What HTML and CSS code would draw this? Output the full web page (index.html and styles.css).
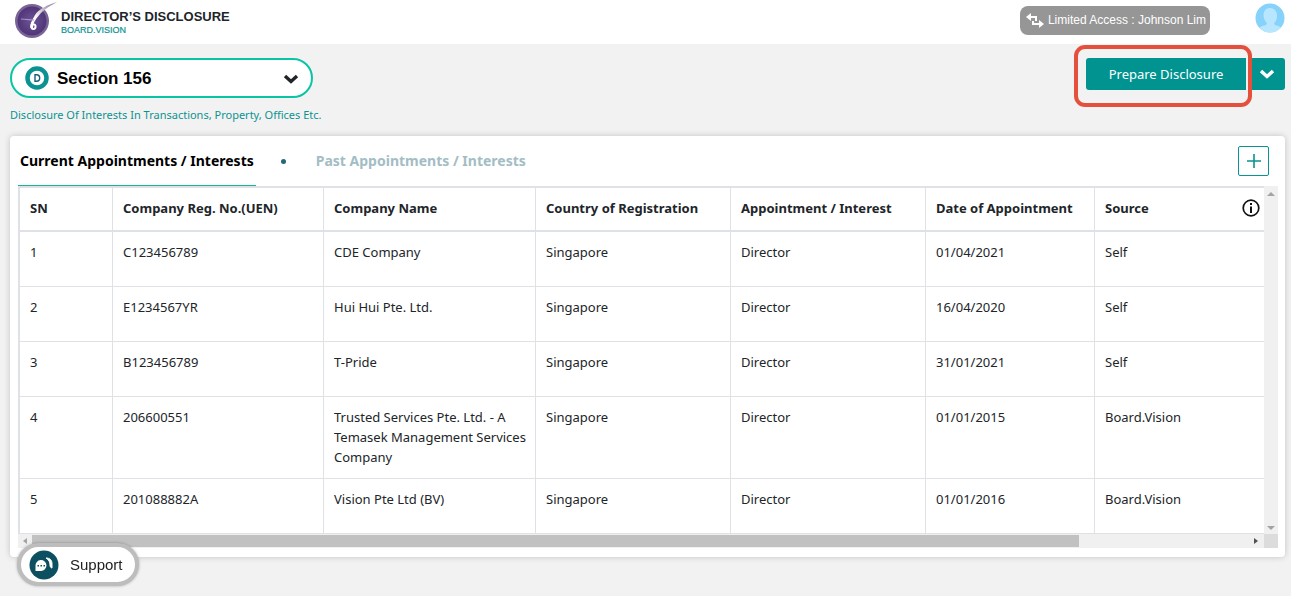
FILE: index.html
```html
<!DOCTYPE html>
<html lang="en">
<head>
  <meta charset="UTF-8">
  <meta name="viewport" content="width=device-width, initial-scale=1.0">
  <title>Director's Disclosure</title>
  <link rel="stylesheet" href="styles.css">
</head>
<body>
  <header class="header">
    <svg class="logo" viewBox="0 0 44 40" aria-hidden="true">
      <defs>
        <radialGradient id="logoFill">
          <stop offset="0" stop-color="#6f5299"/>
          <stop offset="1" stop-color="#4f3677"/>
        </radialGradient>
        <linearGradient id="logoTail" gradientUnits="userSpaceOnUse" x1="22" y1="19" x2="42" y2="1">
          <stop offset="0" stop-color="#fff"/>
          <stop offset="0.6" stop-color="#b3a3bb"/>
          <stop offset="1" stop-color="#86739a"/>
        </linearGradient>
      </defs>
      <circle cx="18" cy="21" r="17" fill="#7a6497"/>
      <circle cx="18" cy="21" r="14.5" fill="url(#logoFill)"/>
      <path d="M43 2C33 5 25 9 21 15c-2 4-5 8-4.500 13h2.500C19 23 21 20 24.500 16 29 10 36 6 43 2z" fill="url(#logoTail)"/>
      <path d="M18 23c-1.500 4-.5 6.500 1.800 6s2.400-5-.3-4.500" fill="none" stroke="#fff" stroke-width="2" stroke-linecap="round"/>
      <path d="M7 19c5 0 9 1 13 1" fill="none" stroke="#a794bd" stroke-width="1.200"/>
    </svg>
    <div class="brand">
      <h1>DIRECTOR’S DISCLOSURE</h1>
      <span>BOARD.VISION</span>
    </div>
    <button class="access-btn" type="button">
      <svg viewBox="0 0 18 15" width="18" height="15" aria-hidden="true">
        <path d="M0 4l5-4v3h6v5H9V5H5v3zM18 11l-5 4v-3H6V8h2v2h5V7z" fill="#fff"/>
      </svg>
      Limited Access : Johnson Lim
    </button>
    <button class="avatar" type="button" aria-label="Profile">
      <svg viewBox="0 0 30 30" aria-hidden="true">
        <defs><clipPath id="avatarClip"><circle cx="15" cy="15" r="14.5"/></clipPath></defs>
        <g clip-path="url(#avatarClip)">
          <rect width="30" height="30" fill="#86d2fa"/>
          <path d="M2 30c0-6 5-7 9-8l1-2C7 16 7 5 15 5s9 11 4 15l1 2c4 1 8 2 8 8z" fill="#b9e6ff"/>
        </g>
      </svg>
    </button>
  </header>

  <main class="content">
    <div class="toolbar">
      <div class="section-select">
        <svg class="section-badge" viewBox="0 0 24 24" aria-hidden="true">
          <circle cx="12" cy="12" r="9.5" fill="#fff" stroke="#0b9391" stroke-width="4.500"/>
          <path d="M10 8.800h1.500a3.200 3.200 0 0 1 0 6.400H10z" fill="none" stroke="#17607a" stroke-width="1.400"/>
        </svg>
        <select aria-label="Section">
          <option>Section 156</option>
        </select>
        <svg class="section-arrow" viewBox="0 0 16 10" aria-hidden="true">
          <path d="M2 2l6 5.500L14 2" fill="none" stroke="#212529" stroke-width="3.400"/>
        </svg>
      </div>
      <div class="actions">
        <div class="highlighted">
          <button class="prepare-btn" type="button">Prepare Disclosure</button>
        </div>
        <button class="more-btn" type="button" aria-label="More actions">
          <svg viewBox="0 0 16 10" width="16" height="10" aria-hidden="true">
            <path d="M2 2l6 5.500L14 2" fill="none" stroke="#fff" stroke-width="3.400"/>
          </svg>
        </button>
      </div>
    </div>
    <p class="description">Disclosure Of Interests In Transactions, Property, Offices Etc.</p>

    <section class="card">
      <nav class="tabs">
        <a class="tab active" href="#current">Current Appointments / Interests</a>
        <span class="dot"></span>
        <a class="tab" href="#past">Past Appointments / Interests</a>
        <button class="add-btn" type="button" aria-label="Add">
          <svg viewBox="0 0 14 14" width="14" height="14" aria-hidden="true">
            <path d="M7 0v14M0 7h14" stroke="#0b9391" stroke-width="1.600"/>
          </svg>
        </button>
      </nav>

      <div class="table-frame">
        <table>
          <colgroup>
            <col class="col-sn"><col class="col-reg"><col class="col-name"><col class="col-country">
            <col class="col-type"><col class="col-date"><col class="col-source">
          </colgroup>
          <thead>
            <tr>
              <th>SN</th>
              <th>Company Reg. No.(UEN)</th>
              <th>Company Name</th>
              <th>Country of Registration</th>
              <th>Appointment / Interest</th>
              <th>Date of Appointment</th>
              <th>
                <div class="source-head">
                  Source
                  <svg viewBox="0 0 18 18" width="18" height="18" aria-hidden="true">
                    <circle cx="9" cy="9" r="7.800" fill="none" stroke="#111" stroke-width="1.700"/>
                    <path d="M8 4h2v2H8zM8 7.500h2V14H8z" fill="#111"/>
                  </svg>
                </div>
              </th>
            </tr>
          </thead>
          <tbody>
            <tr><td>1</td><td>C123456789</td><td>CDE Company</td><td>Singapore</td><td>Director</td><td>01/04/2021</td><td>Self</td></tr>
            <tr><td>2</td><td>E1234567YR</td><td>Hui Hui Pte. Ltd.</td><td>Singapore</td><td>Director</td><td>16/04/2020</td><td>Self</td></tr>
            <tr><td>3</td><td>B123456789</td><td>T-Pride</td><td>Singapore</td><td>Director</td><td>31/01/2021</td><td>Self</td></tr>
            <tr><td>4</td><td>206600551</td><td>Trusted Services Pte. Ltd. - A Temasek Management Services Company</td><td>Singapore</td><td>Director</td><td>01/01/2015</td><td>Board.Vision</td></tr>
            <tr><td>5</td><td>201088882A</td><td>Vision Pte Ltd (BV)</td><td>Singapore</td><td>Director</td><td>01/01/2016</td><td>Board.Vision</td></tr>
          </tbody>
        </table>
        <div class="scroll-y">
          <svg viewBox="0 0 8 4" width="8" height="4"><path d="M0 4l4-4 4 4z" fill="#a3a3a3"/></svg>
          <svg viewBox="0 0 8 4" width="8" height="4"><path d="M0 0h8L4 4z" fill="#a3a3a3"/></svg>
        </div>
        <div class="scroll-x">
          <svg viewBox="0 0 4 6" width="4" height="6"><path d="M4 0v6L0 3z" fill="#a3a3a3"/></svg>
          <div class="track"><div class="thumb"></div></div>
          <svg viewBox="0 0 4 6" width="4" height="6"><path d="M0 0v6l4-3z" fill="#505050"/></svg>
        </div>
        <div class="scroll-corner"></div>
      </div>
    </section>
  </main>

  <button class="support-btn" type="button">
    <svg viewBox="0 0 30 30" width="30" height="30" aria-hidden="true">
      <circle cx="15" cy="15" r="14.500" fill="#0c4f60"/>
      <path d="M6.500 21v-5a5.500 5.500 0 1 1 5.500 5z" fill="#fff"/>
      <path d="M17 8c4 0 6 2 6 6v4c-1 0-2-1-2-3 0-3-1-5-4-7z" fill="#fff" stroke="#fff"/>
      <path d="M8.500 15h1.500v1.500H8.500zM11.500 15H13v1.500h-1.500zM14.500 15H16v1.500h-1.500z" fill="#0c4f60"/>
    </svg>
    Support
  </button>
</body>
</html>
```
FILE: styles.css
```css
* {
  box-sizing: border-box;
}

body {
  margin: 0;
  min-height: 100vh;
  background-color: #f2f2f2;
  color: #212529;
  font-family: "Noto Sans", "Open Sans", sans-serif;
  font-size: 13px;
}

button {
  padding: 0;
  border: none;
  cursor: pointer;
}

svg {
  display: block;
  flex-shrink: 0;
}

.header {
  display: flex;
  align-items: center;
  height: 44px;
  padding: 0 6px 0 14px;
  background-color: #fff;
}

.logo {
  width: 44px;
  height: 40px;
  margin-bottom: 4px;
}

.brand {
  margin: 2px auto 0 3px;
  font-family: "Liberation Sans", Arial, sans-serif;
}

.brand h1 {
  margin: 0;
  font-size: 13px;
  line-height: 14px;
}

.brand span {
  display: block;
  color: #0b9391;
  font-size: 9px;
  line-height: 12px;
  -webkit-text-stroke: 0.2px #0b9391;
}

.access-btn {
  display: flex;
  align-items: center;
  gap: 4px;
  height: 29px;
  margin: 0 45px 4px 0;
  padding: 0 4px 0 6px;
  border-radius: 8px;
  background-color: #969696;
  color: #fff;
  font-family: "Liberation Sans", Arial, sans-serif;
  font-size: 12px;
}

.avatar {
  width: 30px;
  height: 30px;
  margin-bottom: 8px;
  background: none;
}

.content {
  padding: 14px 6px 0 10px;
}

.toolbar {
  display: flex;
  justify-content: space-between;
  align-items: flex-start;
}

.section-select {
  position: relative;
  width: 303px;
}

.section-select select {
  display: block;
  width: 100%;
  height: 40px;
  padding: 0 48px 0 45px;
  border: 2px solid #0ac5a3;
  border-radius: 20px;
  background-color: #fff;
  color: #000;
  font-family: "Liberation Sans", Arial, sans-serif;
  font-size: 17px;
  font-weight: bold;
  appearance: none;
}

.section-badge {
  position: absolute;
  top: 8px;
  left: 15px;
  width: 24px;
  height: 24px;
}

.section-arrow {
  position: absolute;
  top: 16px;
  right: 14px;
  width: 16px;
  height: 10px;
  pointer-events: none;
}

.actions {
  display: flex;
  gap: 2px;
}

.highlighted {
  position: relative;
}

.highlighted::after {
  content: "";
  position: absolute;
  inset: -13px -6px -17px -12px;
  border: 4px solid #e5503c;
  border-radius: 11px;
  pointer-events: none;
}

.prepare-btn,
.more-btn {
  height: 32px;
  background-color: #009390;
  color: #fff;
  font-family: inherit;
  font-size: 13px;
}

.prepare-btn {
  width: 160px;
  border-radius: 3px 0 0 3px;
}

.more-btn {
  display: flex;
  justify-content: center;
  align-items: center;
  width: 37px;
  border-radius: 0 3px 3px 0;
}

.description {
  margin: 8px 0 12px;
  color: #0b9391;
  font-size: 11px;
  line-height: 18px;
}

.card {
  padding: 0 8px 9px;
  border-radius: 4px;
  background-color: #fff;
  box-shadow: 0 0 6px rgba(0, 0, 0, 0.2);
}

.tabs {
  display: flex;
  align-items: center;
  height: 50px;
  padding-right: 8px;
}

.tab {
  height: 50px;
  padding: 0 2px;
  color: #a3bdc5;
  font-size: 14px;
  font-weight: bold;
  line-height: 49px;
  text-decoration: none;
}

.tab.active {
  border-bottom: 1px solid #18b594;
  color: #000;
}

.dot {
  width: 5px;
  height: 5px;
  margin: 0 28px 0 25px;
  border-radius: 50%;
  background-color: #22677a;
}

.add-btn {
  display: flex;
  justify-content: center;
  align-items: center;
  width: 31px;
  height: 30px;
  margin-left: auto;
  border: 1px solid #0b9391;
  border-radius: 2px;
  background-color: #fff;
}

.table-frame {
  display: grid;
  grid-template-columns: 1fr 14px;
}

table {
  width: 100%;
  border-top: 2px solid #dee2e6;
  border-left: 2px solid #dee2e6;
  border-spacing: 0;
  table-layout: fixed;
}

.col-sn {
  width: 93px;
}

.col-reg {
  width: 211px;
}

.col-name {
  width: 212px;
}

.col-country,
.col-type {
  width: 195px;
}

.col-date,
.col-source {
  width: 169px;
}

th,
td {
  padding: 10px 4px 11px 10px;
  border-right: 1px solid #dee2e6;
  border-bottom: 1px solid #dee2e6;
  line-height: 20px;
  text-align: left;
  vertical-align: top;
}

th {
  height: 44px;
  border-bottom-width: 2px;
}

td {
  height: 55px;
}

th:last-child,
td:last-child {
  border-right: none;
}

.source-head {
  display: flex;
  justify-content: space-between;
  align-items: center;
}

.scroll-y {
  display: flex;
  flex-direction: column;
  justify-content: space-between;
  align-items: center;
  padding: 6px 0 4px;
  background-color: #f0f0f0;
}

.scroll-x {
  display: flex;
  align-items: center;
  gap: 5px;
  height: 14px;
  padding: 0 6px 0 5px;
  background-color: #f0f0f0;
}

.track {
  flex: 1;
}

.thumb {
  width: 86%;
  height: 12px;
  background-color: #c1c1c1;
}

.scroll-corner {
  background-color: #dcdcdc;
}

.support-btn {
  position: fixed;
  bottom: 10px;
  left: 17px;
  display: flex;
  align-items: center;
  gap: 11px;
  height: 43px;
  padding: 0 12px 0 8px;
  border: 4px solid #bdbdbd;
  border-radius: 22px;
  background-color: #fff;
  box-shadow: 0 0 3px rgba(0, 0, 0, 0.3);
  color: #222;
  font-family: "Liberation Sans", Arial, sans-serif;
  font-size: 15px;
}
```
